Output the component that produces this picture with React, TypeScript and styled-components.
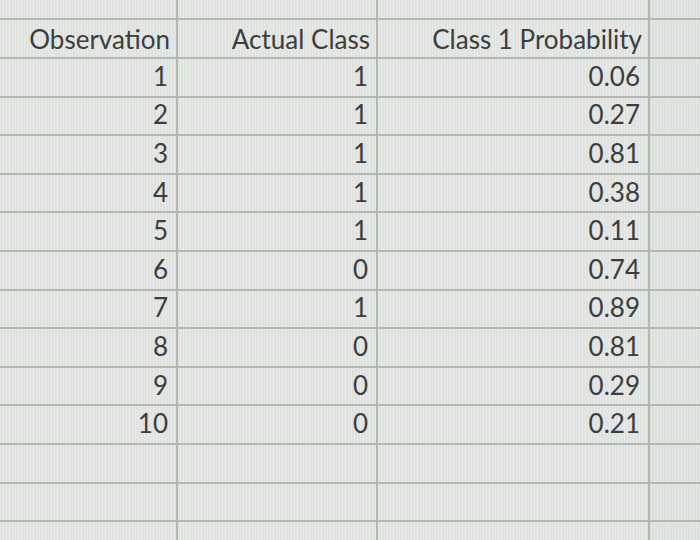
import React from "react";
import styled, { createGlobalStyle } from "styled-components";

const GlobalStyle = createGlobalStyle`
  html, body {
    margin: 0;
    padding: 0;
    background: #e4e7e3;
    overflow: hidden;
  }
`;

const rows: [string, string, string][] = [
  ["1", "1", "0.06"],
  ["2", "1", "0.27"],
  ["3", "1", "0.81"],
  ["4", "1", "0.38"],
  ["5", "1", "0.11"],
  ["6", "0", "0.74"],
  ["7", "1", "0.89"],
  ["8", "0", "0.81"],
  ["9", "0", "0.29"],
  ["10", "0", "0.21"],
];

const BLANK_ROWS = 3;

const Sheet = styled.div`
  width: 700px;
  height: 540px;
  overflow: hidden;
  display: grid;
  grid-template-columns: 178px 200px 272px 50px;
  grid-template-rows: 20px 39px;
  grid-auto-rows: 38.6px;
  font-family: Lato, "Noto Sans", sans-serif;
  font-size: 26px;
  color: #3b3e3e;
  background:
    repeating-linear-gradient(
      90deg,
      rgba(255, 255, 255, 0.16) 0px,
      rgba(255, 255, 255, 0.16) 1px,
      rgba(0, 0, 0, 0.025) 1px,
      rgba(0, 0, 0, 0.025) 3px
    ),
    #e4e7e3;
`;

const Cell = styled.div<{ $edge?: boolean }>`
  display: flex;
  align-items: center;
  justify-content: flex-end;
  padding: 0 8px 3px 0;
  box-sizing: border-box;
  border-right: ${(p) => (p.$edge ? "none" : "2px solid #b3b8b3")};
  border-bottom: 2px solid #b3b8b3;
  white-space: nowrap;
  background: ${(p) => (p.$edge ? "rgba(205, 220, 210, 0.12)" : "transparent")};
`;

const HeadCell = styled(Cell)`
  padding-right: 6px;
  padding-bottom: 0;
`;

export default function App() {
  return (
    <>
      <GlobalStyle />
      <Sheet>
        <Cell />
        <Cell />
        <Cell />
        <Cell $edge />

        <HeadCell>Observation</HeadCell>
        <HeadCell>Actual Class</HeadCell>
        <HeadCell>Class 1 Probability</HeadCell>
        <Cell $edge />

        {rows.map(([obs, actual, prob]) => (
          <React.Fragment key={obs}>
            <Cell>{obs}</Cell>
            <Cell>{actual}</Cell>
            <Cell>{prob}</Cell>
            <Cell $edge />
          </React.Fragment>
        ))}

        {Array.from({ length: BLANK_ROWS }).map((_, i) => (
          <React.Fragment key={`blank-${i}`}>
            <Cell />
            <Cell />
            <Cell />
            <Cell $edge />
          </React.Fragment>
        ))}
      </Sheet>
    </>
  );
}
